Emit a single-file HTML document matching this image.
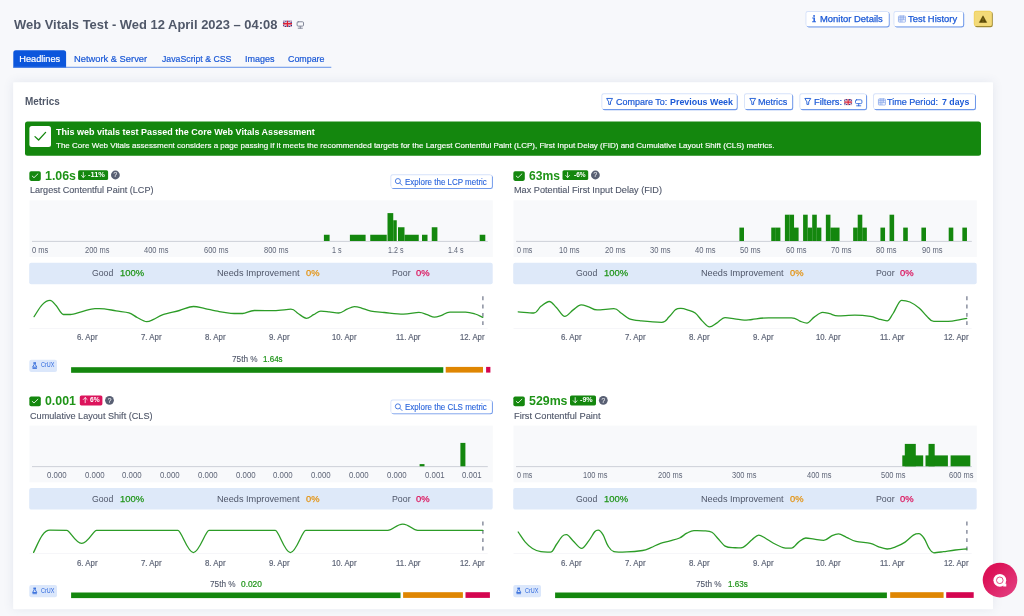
<!DOCTYPE html>
<html lang="en"><head><meta charset="utf-8"><title>Web Vitals Test</title>
<style>
html,body{margin:0;padding:0}
body{width:1024px;height:616px;overflow:hidden;background:#f7f8fb;font-family:"Liberation Sans",sans-serif;position:relative}
.b{position:absolute}
.tx{position:absolute;left:0;top:0;width:1024px;height:616px;will-change:transform}
.t{position:absolute;white-space:nowrap;line-height:1;transform-origin:0 0}
svg.o{position:absolute;left:0;top:0;width:1024px;height:616px;overflow:visible}
</style></head><body>
<div class="b" style="left:13px;top:82px;width:980px;height:527px;box-shadow:0 0 10px rgba(60,80,130,0.10)"></div>
<svg class="o" viewBox="0 0 1024 616">
<svg x="282.90" y="20.50" width="9.10" height="6.60" viewBox="0 0 60 40" preserveAspectRatio="none"><rect width="60" height="40" fill="#283088"/><path d="M0 0L60 40M60 0L0 40" stroke="#fff" stroke-width="7"/><path d="M0 0L60 40M60 0L0 40" stroke="#d8213c" stroke-width="2.6"/><path d="M30 0V40M0 20H60" stroke="#fff" stroke-width="13"/><path d="M30 0V40M0 20H60" stroke="#dc2035" stroke-width="8.5"/></svg>
<g fill="none" stroke="#7d8395" stroke-width="0.95" stroke-linecap="round"><rect x="297.08" y="21.78" width="6.45" height="4.35" rx="1.1"/><path d="M300.30 26.60V28.20M298.20 28.20H302.40"/></g>
<path d="M13.30 67.70V52.80Q13.30 50.30 15.80 50.30H63.60Q66.10 50.30 66.10 52.80V67.70Z" fill="#0c56dc"/>
<rect x="13.30" y="66.80" width="318.00" height="0.90" fill="#5285e6"/>
<rect x="806.50" y="12.10" width="83.20" height="15.30" rx="2.3" fill="#7099ea"/><rect x="805.50" y="11.10" width="83.10" height="15.20" rx="2.3" fill="#d6e2fa"/><rect x="806.40" y="12.00" width="82.20" height="14.30" rx="1.5" fill="#fff"/>
<rect x="894.50" y="12.10" width="69.70" height="15.30" rx="2.3" fill="#7099ea"/><rect x="893.50" y="11.10" width="69.60" height="15.20" rx="2.3" fill="#d6e2fa"/><rect x="894.40" y="12.00" width="68.70" height="14.30" rx="1.5" fill="#fff"/>
<rect x="974.80" y="11.80" width="18.00" height="15.40" rx="2.2" fill="#a08a32"/><rect x="973.80" y="10.80" width="17.90" height="15.30" rx="2.2" fill="#efd05c"/><rect x="974.70" y="11.70" width="17.00" height="14.40" rx="1.4" fill="#f3da78"/>
<g fill="#2f68df"><rect x="813.2" y="15.1" width="1.8" height="1.7" rx="0.4"/><path d="M812.2 17.6h2.8v3.6h1v1h-3.9v-1h1.3v-2.6h-1.2z"/></g>
<g fill="none" stroke="#7fa0ea" stroke-width="0.7"><rect x="898.45" y="16.10" width="7" height="6" rx="0.5"/><path d="M901.95 15.40V22.10M900.20 15.30V22.10M903.40 15.30V19.80M898.50 17.80H905.40M898.50 19.80H905.40"/></g>
<path d="M983 15.8L986.7 22.4H979.3Z" fill="#5a4906" stroke="#5a4906" stroke-width="0.5" stroke-linejoin="round"/><rect x="982.65" y="18.2" width="0.7" height="2.2" fill="#a8923a"/><rect x="982.65" y="21" width="0.7" height="0.7" fill="#a8923a"/>
<rect x="13.30" y="82.40" width="979.70" height="526.90" rx="1.0" fill="#fff"/>
<rect x="602.40" y="94.30" width="135.30" height="15.90" rx="2.3" fill="#7099ea"/><rect x="601.40" y="93.30" width="135.20" height="15.80" rx="2.3" fill="#d6e2fa"/><rect x="602.30" y="94.20" width="134.30" height="14.90" rx="1.5" fill="#fff"/>
<rect x="745.00" y="94.30" width="48.20" height="15.90" rx="2.3" fill="#7099ea"/><rect x="744.00" y="93.30" width="48.10" height="15.80" rx="2.3" fill="#d6e2fa"/><rect x="744.90" y="94.20" width="47.20" height="14.90" rx="1.5" fill="#fff"/>
<rect x="800.40" y="94.30" width="66.70" height="15.90" rx="2.3" fill="#7099ea"/><rect x="799.40" y="93.30" width="66.60" height="15.80" rx="2.3" fill="#d6e2fa"/><rect x="800.30" y="94.20" width="65.70" height="14.90" rx="1.5" fill="#fff"/>
<rect x="874.10" y="94.30" width="101.90" height="15.90" rx="2.3" fill="#7099ea"/><rect x="873.10" y="93.30" width="101.80" height="15.80" rx="2.3" fill="#d6e2fa"/><rect x="874.00" y="94.20" width="100.90" height="14.90" rx="1.5" fill="#fff"/>
<path d="M606.65 98.45H612.55L610.50 101.90V104.40H608.70V101.90Z" fill="none" stroke="#1b59d6" stroke-width="0.9" stroke-linejoin="round"/>
<path d="M749.75 98.45H755.65L753.60 101.90V104.40H751.80V101.90Z" fill="none" stroke="#1b59d6" stroke-width="0.9" stroke-linejoin="round"/>
<path d="M804.85 98.45H810.75L808.70 101.90V104.40H806.90V101.90Z" fill="none" stroke="#1b59d6" stroke-width="0.9" stroke-linejoin="round"/>
<svg x="844.10" y="99.10" width="8.10" height="6.10" viewBox="0 0 60 40" preserveAspectRatio="none"><rect width="60" height="40" fill="#283088"/><path d="M0 0L60 40M60 0L0 40" stroke="#fff" stroke-width="7"/><path d="M0 0L60 40M60 0L0 40" stroke="#d8213c" stroke-width="2.6"/><path d="M30 0V40M0 20H60" stroke="#fff" stroke-width="13"/><path d="M30 0V40M0 20H60" stroke="#dc2035" stroke-width="8.5"/></svg>
<g fill="none" stroke="#1b59d6" stroke-width="0.8" stroke-linecap="round"><rect x="855.50" y="99.80" width="6.40" height="3.80" rx="1.1"/><path d="M858.70 104.00V105.80M856.60 105.80H860.80"/></g>
<g fill="none" stroke="#7fa0ea" stroke-width="0.7"><rect x="878.45" y="99.00" width="7" height="6" rx="0.5"/><path d="M881.95 98.30V105.00M880.20 98.20V105.00M883.40 98.20V102.70M878.50 100.70H885.40M878.50 102.70H885.40"/></g>
<rect x="25.00" y="121.50" width="956.00" height="34.30" rx="2.5" fill="#14870e"/>
<rect x="29.40" y="126.00" width="21.60" height="21.00" rx="2.5" fill="#fff"/>
<path d="M35 136.6L38.6 140L45.6 132.4" fill="none" stroke="#14870e" stroke-width="1.3" stroke-linecap="round" stroke-linejoin="round"/>
<rect x="29.35" y="171.25" width="11.45" height="9.65" rx="1.8" fill="#14870e"/>
<path d="M32.25 176.10L34.00 177.70L37.90 173.90" fill="none" stroke="#eaf5e9" stroke-width="0.9" stroke-linecap="round" stroke-linejoin="round"/>
<rect x="78.10" y="170.20" width="30.00" height="9.90" rx="1.6" fill="#14870e"/>
<path d="M83.30 172.30V177.40M81.40 175.50L83.30 177.40L85.20 175.50" fill="none" stroke="#fff" stroke-width="0.8" stroke-linecap="round" stroke-linejoin="round"/>
<circle cx="115.40" cy="175.00" r="4.4" fill="#585f73"/>
<rect x="391.40" y="175.30" width="101.50" height="13.70" rx="2.3" fill="#7099ea"/><rect x="390.40" y="174.30" width="101.40" height="13.60" rx="2.3" fill="#d6e2fa"/><rect x="391.30" y="175.20" width="100.50" height="12.70" rx="1.5" fill="#fff"/>
<circle cx="397.90" cy="181.10" r="2.55" fill="none" stroke="#3a70e0" stroke-width="0.9"/><path d="M399.80 183.00L402.00 185.20" stroke="#3a70e0" stroke-width="0.9" stroke-linecap="round"/>
<rect x="29.50" y="200.30" width="463.30" height="56.70" fill="#f8f9fb"/>
<rect x="32.00" y="240.90" width="455.80" height="0.90" fill="#c9ccd4"/>
<rect x="29.20" y="262.70" width="463.50" height="21.60" rx="2.0" fill="#dee9f9"/>
<rect x="29.50" y="328.00" width="458.20" height="0.70" fill="#f2f3f7"/>
<path d="M482.90 296.30V328.80" stroke="#6e7488" stroke-width="1.2" stroke-dasharray="3.9 4.4" fill="none"/>
<rect x="323.90" y="234.75" width="5.70" height="6.25" fill="#14870e"/>
<rect x="349.90" y="234.75" width="15.70" height="6.25" fill="#14870e"/>
<rect x="370.25" y="234.75" width="16.50" height="6.25" fill="#14870e"/>
<rect x="387.50" y="213.10" width="5.75" height="27.90" fill="#14870e"/>
<rect x="393.25" y="220.25" width="3.50" height="20.75" fill="#14870e"/>
<rect x="398.00" y="227.25" width="6.50" height="13.75" fill="#14870e"/>
<rect x="404.50" y="234.75" width="14.25" height="6.25" fill="#14870e"/>
<rect x="422.00" y="234.75" width="5.50" height="6.25" fill="#14870e"/>
<rect x="431.75" y="227.25" width="5.65" height="13.75" fill="#14870e"/>
<rect x="479.70" y="234.75" width="5.60" height="6.25" fill="#14870e"/>
<path d="M34.1 316.6C36.8 312.6 39.6 307.3 42.3 304.6C44.9 301.9 47.7 300.4 50.0 300.4C52.3 300.4 54.1 303.4 56.3 305.8C58.5 308.2 61.0 314.5 63.4 314.5C65.8 314.5 67.3 314.5 70.4 314.5C73.5 314.5 78.0 312.6 82.1 311.6C86.2 310.6 91.3 308.6 95.0 308.6C98.7 308.6 100.9 308.4 104.4 308.8C107.9 309.2 112.0 310.2 116.1 310.9C120.2 311.6 125.5 311.7 129.0 312.8C132.5 313.9 134.3 316.0 137.2 317.5C140.1 319.0 143.9 321.7 146.6 321.7C149.3 321.7 150.9 320.6 153.6 319.4C156.3 318.2 158.7 316.2 163.0 314.7C167.3 313.2 174.3 311.9 179.4 310.5C184.5 309.1 189.1 306.5 193.4 306.5C197.7 306.5 200.8 307.8 205.1 308.6C209.4 309.5 214.9 310.8 219.2 311.6C223.5 312.4 227.0 313.0 230.9 313.3C234.8 313.6 238.7 313.5 242.6 313.5C246.5 313.5 249.2 310.5 254.4 310.5C259.7 310.5 268.0 310.6 274.1 310.6C280.2 310.6 286.9 309.2 290.9 309.2C294.9 309.2 295.5 312.0 298.1 313.5C300.7 315.0 303.8 318.3 306.4 318.3C309.0 318.3 311.2 315.9 313.6 314.7C316.0 313.5 318.2 311.1 320.8 311.1C323.4 311.1 326.2 311.5 329.2 311.8C332.2 312.1 335.7 313.0 338.7 313.0C341.7 313.0 344.5 310.3 347.1 309.2C349.7 308.1 351.9 306.6 354.3 306.6C356.7 306.6 358.7 307.2 361.5 308.0C364.3 308.8 367.2 310.4 371.0 311.1C374.8 311.9 378.8 312.0 384.2 312.5C389.6 313.0 397.5 314.2 403.3 314.2C409.1 314.2 414.9 312.3 418.9 312.3C422.9 312.3 424.6 313.9 427.2 314.7C429.8 315.5 432.0 317.1 434.4 317.1C436.8 317.1 439.0 316.2 441.6 315.4C444.2 314.6 446.0 312.1 450.0 312.1C454.0 312.1 461.3 312.1 465.5 312.1C469.7 312.1 472.2 313.1 475.1 314.0C478.0 314.9 480.2 316.2 482.8 317.3" fill="none" stroke="#2c9c27" stroke-width="1.3" stroke-linejoin="round" stroke-linecap="round"/>
<rect x="29.30" y="359.70" width="27.70" height="12.30" rx="2.0" fill="#dbe7fb"/>
<path d="M33.80 362.90h1.8M34.10 362.90v1.6l-1.5 2.7h4.2l-1.5 -2.7v-1.6M32.90 368.40h3.6" fill="none" stroke="#1b59d6" stroke-width="0.8" stroke-linejoin="round" stroke-linecap="round"/>
<rect x="71.10" y="367.20" width="372.20" height="5.60" fill="#14870e"/>
<rect x="445.70" y="366.90" width="37.30" height="5.70" fill="#df8602"/>
<rect x="486.10" y="366.90" width="4.30" height="5.70" fill="#d40550"/>
<rect x="513.35" y="171.25" width="11.45" height="9.65" rx="1.8" fill="#14870e"/>
<path d="M516.25 176.10L518.00 177.70L521.90 173.90" fill="none" stroke="#eaf5e9" stroke-width="0.9" stroke-linecap="round" stroke-linejoin="round"/>
<rect x="562.50" y="170.20" width="25.70" height="9.90" rx="1.6" fill="#14870e"/>
<path d="M567.60 172.30V177.40M565.70 175.50L567.60 177.40L569.50 175.50" fill="none" stroke="#fff" stroke-width="0.8" stroke-linecap="round" stroke-linejoin="round"/>
<circle cx="595.40" cy="175.00" r="4.4" fill="#585f73"/>
<rect x="513.50" y="200.30" width="463.30" height="56.70" fill="#f8f9fb"/>
<rect x="516.00" y="240.90" width="455.80" height="0.90" fill="#c9ccd4"/>
<rect x="513.20" y="262.70" width="463.50" height="21.60" rx="2.0" fill="#dee9f9"/>
<rect x="513.50" y="328.00" width="458.20" height="0.70" fill="#f2f3f7"/>
<path d="M966.90 296.30V328.80" stroke="#6e7488" stroke-width="1.2" stroke-dasharray="3.9 4.4" fill="none"/>
<rect x="739.40" y="227.60" width="4.60" height="13.40" fill="#14870e"/>
<rect x="771.25" y="227.60" width="4.60" height="13.40" fill="#14870e"/>
<rect x="775.80" y="227.60" width="4.60" height="13.40" fill="#14870e"/>
<rect x="784.90" y="214.70" width="4.60" height="26.30" fill="#14870e"/>
<rect x="789.45" y="214.70" width="4.60" height="26.30" fill="#14870e"/>
<rect x="794.00" y="227.60" width="4.60" height="13.40" fill="#14870e"/>
<rect x="803.10" y="214.70" width="4.60" height="26.30" fill="#14870e"/>
<rect x="807.65" y="227.60" width="4.60" height="13.40" fill="#14870e"/>
<rect x="812.20" y="214.70" width="4.60" height="26.30" fill="#14870e"/>
<rect x="816.75" y="227.60" width="4.60" height="13.40" fill="#14870e"/>
<rect x="825.85" y="214.70" width="4.60" height="26.30" fill="#14870e"/>
<rect x="830.40" y="227.60" width="4.60" height="13.40" fill="#14870e"/>
<rect x="834.95" y="227.60" width="4.60" height="13.40" fill="#14870e"/>
<rect x="853.15" y="227.60" width="4.60" height="13.40" fill="#14870e"/>
<rect x="857.70" y="214.70" width="4.60" height="26.30" fill="#14870e"/>
<rect x="862.25" y="227.60" width="4.60" height="13.40" fill="#14870e"/>
<rect x="880.45" y="227.60" width="4.60" height="13.40" fill="#14870e"/>
<rect x="889.55" y="214.70" width="4.60" height="26.30" fill="#14870e"/>
<rect x="903.20" y="227.60" width="4.60" height="13.40" fill="#14870e"/>
<rect x="921.40" y="227.60" width="4.60" height="13.40" fill="#14870e"/>
<rect x="948.70" y="227.60" width="4.60" height="13.40" fill="#14870e"/>
<rect x="962.35" y="227.60" width="4.60" height="13.40" fill="#14870e"/>
<path d="M518.2 311.8C523.4 312.2 529.9 313.0 533.7 313.0C537.5 313.0 538.3 308.2 540.9 306.3C543.5 304.4 546.7 301.5 549.3 301.5C551.9 301.5 553.8 305.0 556.4 307.5C559.0 310.0 562.0 316.4 564.8 316.4C567.6 316.4 570.5 311.8 573.2 309.9C575.9 308.0 578.5 304.9 581.1 304.9C583.7 304.9 586.0 306.0 588.7 306.8C591.4 307.6 592.9 309.9 597.1 309.9C601.3 309.9 609.9 308.7 613.9 308.7C617.9 308.7 618.4 311.3 621.0 313.0C623.6 314.7 626.0 317.5 629.4 318.8C632.8 320.1 636.0 320.3 641.4 320.9C646.8 321.5 657.1 322.3 661.7 322.3C666.3 322.3 666.6 319.2 668.9 317.1C671.2 315.0 673.6 311.1 675.6 309.6C677.6 308.2 679.0 308.4 681.0 308.4C683.0 308.4 684.9 309.0 687.3 309.8C689.7 310.6 692.7 311.1 695.2 313.0C697.7 314.9 700.0 318.8 702.4 321.1C704.8 323.4 707.1 326.9 709.5 326.9C711.9 326.9 714.1 324.7 716.7 323.1C719.3 321.6 722.1 317.6 725.1 317.6C728.1 317.6 731.5 318.4 734.7 318.8C737.9 319.2 741.3 320.2 744.2 320.2C747.1 320.2 747.9 319.9 752.0 319.5C756.1 319.1 762.1 317.8 768.7 317.8C775.3 317.8 786.2 317.8 791.4 317.8C796.6 317.8 797.2 320.2 799.8 321.1C802.4 322.0 804.6 323.1 807.0 323.1C809.4 323.1 811.6 318.9 814.2 317.1C816.8 315.3 819.9 312.3 822.5 312.3C825.1 312.3 827.1 313.1 829.7 313.7C832.3 314.3 833.9 315.9 838.1 315.9C842.3 315.9 849.4 315.2 854.8 315.2C860.2 315.2 866.4 315.8 870.4 316.4C874.4 317.0 876.0 318.2 878.8 319.0C881.6 319.8 884.7 320.9 887.1 320.9C889.5 320.9 890.7 316.9 893.1 313.5C895.5 310.1 898.7 300.3 901.5 300.3C904.3 300.3 906.9 300.7 909.9 302.0C912.9 303.3 916.6 305.9 919.4 308.2C922.2 310.5 924.2 313.7 926.6 315.9C929.0 318.1 930.2 321.4 933.8 321.4C937.4 321.4 943.7 321.4 948.1 321.4C952.5 321.4 957.0 320.2 960.1 319.7C963.2 319.2 964.6 318.8 966.8 318.3" fill="none" stroke="#2c9c27" stroke-width="1.3" stroke-linejoin="round" stroke-linecap="round"/>
<rect x="29.35" y="396.55" width="11.45" height="9.65" rx="1.8" fill="#14870e"/>
<path d="M32.25 401.40L34.00 403.00L37.90 399.20" fill="none" stroke="#eaf5e9" stroke-width="0.9" stroke-linecap="round" stroke-linejoin="round"/>
<rect x="79.80" y="395.50" width="22.60" height="9.90" rx="1.6" fill="#dc145c"/>
<path d="M85.20 402.70V397.60M83.30 399.50L85.20 397.60L87.10 399.50" fill="none" stroke="#fff" stroke-width="0.8" stroke-linecap="round" stroke-linejoin="round"/>
<circle cx="109.50" cy="400.30" r="4.4" fill="#585f73"/>
<rect x="391.40" y="400.60" width="101.50" height="13.70" rx="2.3" fill="#7099ea"/><rect x="390.40" y="399.60" width="101.40" height="13.60" rx="2.3" fill="#d6e2fa"/><rect x="391.30" y="400.50" width="100.50" height="12.70" rx="1.5" fill="#fff"/>
<circle cx="397.90" cy="406.40" r="2.55" fill="none" stroke="#3a70e0" stroke-width="0.9"/><path d="M399.80 408.30L402.00 410.50" stroke="#3a70e0" stroke-width="0.9" stroke-linecap="round"/>
<rect x="29.50" y="425.60" width="463.30" height="56.70" fill="#f8f9fb"/>
<rect x="32.00" y="466.20" width="455.80" height="0.90" fill="#c9ccd4"/>
<rect x="29.20" y="488.00" width="463.50" height="21.60" rx="2.0" fill="#dee9f9"/>
<rect x="29.50" y="553.30" width="458.20" height="0.70" fill="#f2f3f7"/>
<path d="M482.90 521.60V554.10" stroke="#6e7488" stroke-width="1.2" stroke-dasharray="3.9 4.4" fill="none"/>
<rect x="419.60" y="464.10" width="4.90" height="2.20" fill="#14870e"/>
<rect x="460.40" y="442.90" width="5.00" height="23.40" fill="#14870e"/>
<path d="M33.6 552.4C38.5 542.5 42.5 530.2 49.9 530.2L66.7 530.4C70.2 530.4 75.2 543.3 81.7 543.3C88.2 543.3 93.1 530.4 96.6 530.4L177.9 530.4C181.4 530.4 187.4 552.6 193.4 552.6C199.4 552.6 205.5 530.4 209.0 530.4L275.3 530.4C278.8 530.4 284.4 552.6 290.4 552.6C296.4 552.6 302.2 530.4 305.7 530.4L387.8 530.4C392.8 530.4 396.3 524.1 402.8 524.1C409.3 524.1 412.7 530.4 417.7 530.4L482.8 530.4" fill="none" stroke="#2c9c27" stroke-width="1.3" stroke-linejoin="round" stroke-linecap="round"/>
<rect x="29.30" y="585.00" width="27.70" height="12.30" rx="2.0" fill="#dbe7fb"/>
<path d="M33.80 588.20h1.8M34.10 588.20v1.6l-1.5 2.7h4.2l-1.5 -2.7v-1.6M32.90 593.70h3.6" fill="none" stroke="#1b59d6" stroke-width="0.8" stroke-linejoin="round" stroke-linecap="round"/>
<rect x="71.10" y="592.50" width="329.40" height="5.60" fill="#14870e"/>
<rect x="403.10" y="592.20" width="59.80" height="5.70" fill="#df8602"/>
<rect x="465.50" y="592.20" width="24.40" height="5.70" fill="#d40550"/>
<rect x="513.35" y="396.55" width="11.45" height="9.65" rx="1.8" fill="#14870e"/>
<path d="M516.25 401.40L518.00 403.00L521.90 399.20" fill="none" stroke="#eaf5e9" stroke-width="0.9" stroke-linecap="round" stroke-linejoin="round"/>
<rect x="570.00" y="395.50" width="26.00" height="9.90" rx="1.6" fill="#14870e"/>
<path d="M575.20 397.60V402.70M573.30 400.80L575.20 402.70L577.10 400.80" fill="none" stroke="#fff" stroke-width="0.8" stroke-linecap="round" stroke-linejoin="round"/>
<circle cx="603.30" cy="400.30" r="4.4" fill="#585f73"/>
<rect x="513.50" y="425.60" width="463.30" height="56.70" fill="#f8f9fb"/>
<rect x="516.00" y="466.20" width="455.80" height="0.90" fill="#c9ccd4"/>
<rect x="513.20" y="488.00" width="463.50" height="21.60" rx="2.0" fill="#dee9f9"/>
<rect x="513.50" y="553.30" width="458.20" height="0.70" fill="#f2f3f7"/>
<path d="M966.90 521.60V554.10" stroke="#6e7488" stroke-width="1.2" stroke-dasharray="3.9 4.4" fill="none"/>
<rect x="902.30" y="455.40" width="20.90" height="10.90" fill="#14870e"/>
<rect x="904.80" y="443.90" width="11.00" height="22.40" fill="#14870e"/>
<rect x="925.50" y="455.40" width="22.40" height="10.90" fill="#14870e"/>
<rect x="928.50" y="443.90" width="6.20" height="22.40" fill="#14870e"/>
<rect x="950.60" y="455.40" width="19.70" height="10.90" fill="#14870e"/>
<path d="M518.2 532.0C520.6 535.4 522.9 539.4 525.3 542.1C527.7 544.9 529.9 546.9 532.5 548.5C535.1 550.1 537.9 551.1 540.9 551.7C543.9 552.3 547.9 552.1 550.5 552.1C553.1 552.1 554.4 547.2 556.4 544.5C558.4 541.8 560.7 537.7 562.4 536.1C564.1 534.5 564.9 534.7 566.7 534.7C568.5 534.7 570.7 538.6 573.2 540.9C575.7 543.2 579.0 548.3 581.6 548.3C584.2 548.3 586.5 543.6 588.7 540.9C590.9 538.1 593.1 533.6 594.7 531.8C596.3 530.0 596.9 530.1 598.3 530.1C599.7 530.1 601.5 532.3 603.1 534.9C604.7 537.5 606.1 542.9 607.9 545.7C609.7 548.5 610.7 550.7 613.9 551.7C617.1 552.7 622.2 551.9 627.0 551.9C631.8 551.9 638.6 551.2 642.6 550.5C646.6 549.8 647.9 548.8 650.9 547.6C653.9 546.4 657.3 544.4 660.5 543.3C663.7 542.2 666.9 541.8 670.1 540.9C673.3 540.0 676.8 539.3 679.6 538.0C682.4 536.7 684.4 534.4 686.8 533.2C689.2 532.0 691.2 530.6 694.0 530.6C696.8 530.6 700.6 530.5 703.6 530.8C706.6 531.1 709.5 531.0 711.9 532.3C714.3 533.6 715.7 536.2 717.9 538.5C720.1 540.8 722.7 544.6 725.1 546.1C727.5 547.6 729.3 547.6 732.3 547.6C735.3 547.6 739.7 548.6 743.0 547.3C746.3 546.0 749.4 541.7 752.0 539.7C754.6 537.7 756.5 535.1 758.7 535.1C760.9 535.1 762.6 536.6 765.1 538.0C767.6 539.4 770.5 541.7 773.5 543.3C776.5 544.9 780.1 546.8 783.1 547.6C786.1 548.4 788.8 548.1 791.4 548.1C794.0 548.1 796.2 543.8 798.6 542.1C801.0 540.4 803.2 538.0 805.8 538.0C808.4 538.0 811.2 538.8 814.2 539.2C817.2 539.6 820.7 540.4 823.7 540.4C826.7 540.4 829.6 536.7 832.1 535.6C834.6 534.5 836.2 533.9 838.6 533.9C841.0 533.9 843.6 536.0 846.5 537.3C849.4 538.5 852.0 540.4 856.0 541.4C860.0 542.4 866.6 542.4 870.4 543.3C874.2 544.2 876.0 545.9 878.8 546.9C881.6 547.9 884.3 549.0 887.1 549.0C889.9 549.0 892.5 548.0 895.5 546.9C898.5 545.8 902.1 544.1 905.1 542.1C908.1 540.1 911.1 536.5 913.4 535.1C915.7 533.7 917.1 533.7 918.9 533.7C920.7 533.7 922.5 536.1 924.2 538.5C925.9 540.9 927.4 545.7 929.0 548.1C930.6 550.5 931.4 552.8 933.8 552.8C936.2 552.8 939.7 552.2 943.3 551.7C946.9 551.2 951.4 550.5 955.3 550.0C959.2 549.5 963.0 549.3 966.8 549.0" fill="none" stroke="#2c9c27" stroke-width="1.3" stroke-linejoin="round" stroke-linecap="round"/>
<rect x="513.30" y="585.00" width="27.70" height="12.30" rx="2.0" fill="#dbe7fb"/>
<path d="M517.80 588.20h1.8M518.10 588.20v1.6l-1.5 2.7h4.2l-1.5 -2.7v-1.6M516.90 593.70h3.6" fill="none" stroke="#1b59d6" stroke-width="0.8" stroke-linejoin="round" stroke-linecap="round"/>
<rect x="555.10" y="592.50" width="331.80" height="5.60" fill="#14870e"/>
<rect x="890.20" y="592.20" width="53.40" height="5.70" fill="#df8602"/>
<rect x="946.20" y="592.20" width="27.50" height="5.70" fill="#d40550"/>
<defs><linearGradient id="cg" x1="0.15" y1="0.15" x2="0.85" y2="0.85"><stop offset="0.15" stop-color="#dc1257"/><stop offset="1" stop-color="#e23a7c"/></linearGradient></defs><circle cx="1000" cy="580.1" r="17.3" fill="url(#cg)"/>
<circle cx="999.8" cy="580.3" r="6.4" fill="#fff"/><rect x="1003.2" y="583.5" width="3.1" height="3.1" rx="0.3" fill="#fff"/><circle cx="999.8" cy="580.3" r="3.3" fill="none" stroke="#de2467" stroke-width="0.8"/>

</svg>
<div class="tx">
<span class="t" style="left:14.30px;top:18.00px;font-size:13.3px;font-weight:700;transform:scaleX(0.9741);color:#505869">Web Vitals Test - Wed 12 April 2023 – 04:08</span>
<span class="t" style="left:19.30px;top:55.00px;font-size:9.2px;-webkit-text-stroke:0.2px #ffffff;color:#ffffff">Headlines</span>
<span class="t" style="left:74.40px;top:55.00px;font-size:9.2px;-webkit-text-stroke:0.2px #1b59d6;transform:scaleX(1.0153);color:#1b59d6">Network &amp; Server</span>
<span class="t" style="left:161.50px;top:55.00px;font-size:9.2px;-webkit-text-stroke:0.2px #1b59d6;transform:scaleX(0.9505);color:#1b59d6">JavaScript &amp; CSS</span>
<span class="t" style="left:244.90px;top:55.00px;font-size:9.2px;-webkit-text-stroke:0.2px #1b59d6;transform:scaleX(0.9787);color:#1b59d6">Images</span>
<span class="t" style="left:288.40px;top:55.00px;font-size:9.2px;-webkit-text-stroke:0.2px #1b59d6;transform:scaleX(0.9657);color:#1b59d6">Compare</span>
<span class="t" style="left:820.40px;top:15.00px;font-size:9.0px;-webkit-text-stroke:0.25px #1b59d6;transform:scaleX(1.0461);color:#1b59d6">Monitor Details</span>
<span class="t" style="left:908.40px;top:15.00px;font-size:9.0px;-webkit-text-stroke:0.25px #1b59d6;transform:scaleX(1.0443);color:#1b59d6">Test History</span>
<span class="t" style="left:25.00px;top:97.00px;font-size:10.3px;font-weight:700;transform:scaleX(0.9650);color:#505869">Metrics</span>
<span class="t" style="left:615.80px;top:98.00px;font-size:9.2px;-webkit-text-stroke:0.2px #1b59d6;transform:scaleX(0.9764);color:#1b59d6">Compare To:</span>
<span class="t" style="left:669.60px;top:98.00px;font-size:9.2px;font-weight:700;transform:scaleX(0.9662);color:#1b59d6">Previous Week</span>
<span class="t" style="left:758.40px;top:98.00px;font-size:9.2px;-webkit-text-stroke:0.2px #1b59d6;transform:scaleX(0.9862);color:#1b59d6">Metrics</span>
<span class="t" style="left:813.60px;top:98.00px;font-size:9.2px;-webkit-text-stroke:0.2px #1b59d6;transform:scaleX(1.0159);color:#1b59d6">Filters:</span>
<span class="t" style="left:887.40px;top:98.00px;font-size:9.2px;-webkit-text-stroke:0.2px #1b59d6;transform:scaleX(0.9855);color:#1b59d6">Time Period:</span>
<span class="t" style="left:941.70px;top:98.00px;font-size:9.2px;font-weight:700;transform:scaleX(0.9542);color:#1b59d6">7 days</span>
<span class="t" style="left:56.40px;top:128.00px;font-size:9.2px;font-weight:700;transform:scaleX(0.9806);color:#fff">This web vitals test Passed the Core Web Vitals Assessment</span>
<span class="t" style="left:56.40px;top:142.00px;font-size:7.8px;-webkit-text-stroke:0.15px #fff;transform:scaleX(1.0297);color:#fff">The Core Web Vitals assessment considers a page passing if it meets the recommended targets for the Largest Contentful Paint (LCP), First Input Delay (FID) and Cumulative Layout Shift (CLS) metrics.</span>
<span class="t" style="left:44.80px;top:170.00px;font-size:12.2px;font-weight:700;transform:scaleX(1.0164);color:#1f9418">1.06s</span>
<span class="t" style="left:88.30px;top:172.00px;font-size:6.5px;font-weight:700;transform:scaleX(1.1397);color:#fff">-11%</span>
<span class="t" style="left:113.55px;top:172.00px;font-size:6.6px;-webkit-text-stroke:0.15px #e4e6ea;color:#e4e6ea">?</span>
<span class="t" style="left:29.60px;top:186.00px;font-size:9.0px;-webkit-text-stroke:0.12px #4f5669;transform:scaleX(1.0075);color:#4f5669">Largest Contentful Paint (LCP)</span>
<span class="t" style="left:404.80px;top:178.00px;font-size:8.3px;-webkit-text-stroke:0.1px #2460db;transform:scaleX(0.9604);color:#2460db">Explore the LCP metric</span>
<span class="t" style="left:92.30px;top:268.00px;font-size:9.8px;transform:scaleX(0.8887);color:#4f5669">Good</span>
<span class="t" style="left:119.90px;top:268.00px;font-size:9.8px;-webkit-text-stroke:0.25px #1f9418;transform:scaleX(0.9616);color:#1f9418">100%</span>
<span class="t" style="left:217.20px;top:268.00px;font-size:9.8px;transform:scaleX(0.9363);color:#4f5669">Needs Improvement</span>
<span class="t" style="left:305.50px;top:268.00px;font-size:9.8px;-webkit-text-stroke:0.25px #e39312;transform:scaleX(0.9526);color:#e39312">0%</span>
<span class="t" style="left:391.90px;top:268.00px;font-size:9.8px;transform:scaleX(0.8984);color:#4f5669">Poor</span>
<span class="t" style="left:416.30px;top:268.00px;font-size:9.8px;-webkit-text-stroke:0.25px #dc145c;transform:scaleX(0.9596);color:#dc145c">0%</span>
<span class="t" style="left:76.55px;top:333.00px;font-size:8.3px;-webkit-text-stroke:0.2px #5f6678;transform:scaleX(0.9452);color:#5f6678">6. Apr</span>
<span class="t" style="left:140.85px;top:333.00px;font-size:8.3px;-webkit-text-stroke:0.2px #5f6678;transform:scaleX(0.9452);color:#5f6678">7. Apr</span>
<span class="t" style="left:205.15px;top:333.00px;font-size:8.3px;-webkit-text-stroke:0.2px #5f6678;transform:scaleX(0.9452);color:#5f6678">8. Apr</span>
<span class="t" style="left:269.45px;top:333.00px;font-size:8.3px;-webkit-text-stroke:0.2px #5f6678;transform:scaleX(0.9452);color:#5f6678">9. Apr</span>
<span class="t" style="left:331.75px;top:333.00px;font-size:8.3px;-webkit-text-stroke:0.2px #5f6678;transform:scaleX(0.9317);color:#5f6678">10. Apr</span>
<span class="t" style="left:396.05px;top:333.00px;font-size:8.3px;-webkit-text-stroke:0.2px #5f6678;transform:scaleX(0.9538);color:#5f6678">11. Apr</span>
<span class="t" style="left:460.30px;top:333.00px;font-size:8.3px;-webkit-text-stroke:0.2px #5f6678;transform:scaleX(0.9317);color:#5f6678">12. Apr</span>
<span class="t" style="left:32.20px;top:246.00px;font-size:8.3px;transform:scaleX(0.9119);color:#5f6678">0 ms</span>
<span class="t" style="left:84.65px;top:246.00px;font-size:8.3px;transform:scaleX(0.9001);color:#5f6678">200 ms</span>
<span class="t" style="left:144.45px;top:246.00px;font-size:8.3px;transform:scaleX(0.9001);color:#5f6678">400 ms</span>
<span class="t" style="left:204.25px;top:246.00px;font-size:8.3px;transform:scaleX(0.9001);color:#5f6678">600 ms</span>
<span class="t" style="left:264.15px;top:246.00px;font-size:8.3px;transform:scaleX(0.9001);color:#5f6678">800 ms</span>
<span class="t" style="left:331.60px;top:246.00px;font-size:8.3px;transform:scaleX(0.8666);color:#5f6678">1 s</span>
<span class="t" style="left:388.25px;top:246.00px;font-size:8.3px;transform:scaleX(0.8611);color:#5f6678">1.2 s</span>
<span class="t" style="left:448.05px;top:246.00px;font-size:8.3px;transform:scaleX(0.8611);color:#5f6678">1.4 s</span>
<span class="t" style="left:40.90px;top:362.00px;font-size:6.4px;transform:scaleX(0.8512);color:#2c66dd">CrUX</span>
<span class="t" style="left:231.50px;top:355.00px;font-size:8.3px;-webkit-text-stroke:0.1px #4f5669;transform:scaleX(0.9906);color:#4f5669">75th %</span>
<span class="t" style="left:263.40px;top:355.00px;font-size:8.3px;-webkit-text-stroke:0.2px #1f9418;transform:scaleX(0.9657);color:#1f9418">1.64s</span>
<span class="t" style="left:528.80px;top:170.00px;font-size:12.2px;font-weight:700;transform:scaleX(0.9945);color:#1f9418">63ms</span>
<span class="t" style="left:573.60px;top:172.00px;font-size:6.5px;font-weight:700;transform:scaleX(1.0032);color:#fff">-6%</span>
<span class="t" style="left:593.55px;top:172.00px;font-size:6.6px;-webkit-text-stroke:0.15px #e4e6ea;color:#e4e6ea">?</span>
<span class="t" style="left:513.60px;top:186.00px;font-size:9.0px;-webkit-text-stroke:0.12px #4f5669;transform:scaleX(1.0169);color:#4f5669">Max Potential First Input Delay (FID)</span>
<span class="t" style="left:576.30px;top:268.00px;font-size:9.8px;transform:scaleX(0.8887);color:#4f5669">Good</span>
<span class="t" style="left:603.90px;top:268.00px;font-size:9.8px;-webkit-text-stroke:0.25px #1f9418;transform:scaleX(0.9616);color:#1f9418">100%</span>
<span class="t" style="left:701.20px;top:268.00px;font-size:9.8px;transform:scaleX(0.9363);color:#4f5669">Needs Improvement</span>
<span class="t" style="left:789.50px;top:268.00px;font-size:9.8px;-webkit-text-stroke:0.25px #e39312;transform:scaleX(0.9526);color:#e39312">0%</span>
<span class="t" style="left:875.90px;top:268.00px;font-size:9.8px;transform:scaleX(0.8984);color:#4f5669">Poor</span>
<span class="t" style="left:900.30px;top:268.00px;font-size:9.8px;-webkit-text-stroke:0.25px #dc145c;transform:scaleX(0.9596);color:#dc145c">0%</span>
<span class="t" style="left:560.55px;top:333.00px;font-size:8.3px;-webkit-text-stroke:0.2px #5f6678;transform:scaleX(0.9452);color:#5f6678">6. Apr</span>
<span class="t" style="left:624.85px;top:333.00px;font-size:8.3px;-webkit-text-stroke:0.2px #5f6678;transform:scaleX(0.9452);color:#5f6678">7. Apr</span>
<span class="t" style="left:689.15px;top:333.00px;font-size:8.3px;-webkit-text-stroke:0.2px #5f6678;transform:scaleX(0.9452);color:#5f6678">8. Apr</span>
<span class="t" style="left:753.45px;top:333.00px;font-size:8.3px;-webkit-text-stroke:0.2px #5f6678;transform:scaleX(0.9452);color:#5f6678">9. Apr</span>
<span class="t" style="left:815.75px;top:333.00px;font-size:8.3px;-webkit-text-stroke:0.2px #5f6678;transform:scaleX(0.9317);color:#5f6678">10. Apr</span>
<span class="t" style="left:880.05px;top:333.00px;font-size:8.3px;-webkit-text-stroke:0.2px #5f6678;transform:scaleX(0.9538);color:#5f6678">11. Apr</span>
<span class="t" style="left:944.30px;top:333.00px;font-size:8.3px;-webkit-text-stroke:0.2px #5f6678;transform:scaleX(0.9317);color:#5f6678">12. Apr</span>
<span class="t" style="left:516.80px;top:246.00px;font-size:8.3px;transform:scaleX(0.8563);color:#5f6678">0 ms</span>
<span class="t" style="left:559.20px;top:246.00px;font-size:8.3px;transform:scaleX(0.9118);color:#5f6678">10 ms</span>
<span class="t" style="left:604.50px;top:246.00px;font-size:8.3px;transform:scaleX(0.9118);color:#5f6678">20 ms</span>
<span class="t" style="left:649.80px;top:246.00px;font-size:8.3px;transform:scaleX(0.9118);color:#5f6678">30 ms</span>
<span class="t" style="left:695.10px;top:246.00px;font-size:8.3px;transform:scaleX(0.9118);color:#5f6678">40 ms</span>
<span class="t" style="left:740.40px;top:246.00px;font-size:8.3px;transform:scaleX(0.9118);color:#5f6678">50 ms</span>
<span class="t" style="left:785.70px;top:246.00px;font-size:8.3px;transform:scaleX(0.9118);color:#5f6678">60 ms</span>
<span class="t" style="left:831.00px;top:246.00px;font-size:8.3px;transform:scaleX(0.9118);color:#5f6678">70 ms</span>
<span class="t" style="left:876.30px;top:246.00px;font-size:8.3px;transform:scaleX(0.9118);color:#5f6678">80 ms</span>
<span class="t" style="left:921.60px;top:246.00px;font-size:8.3px;transform:scaleX(0.9118);color:#5f6678">90 ms</span>
<span class="t" style="left:44.80px;top:395.00px;font-size:12.2px;font-weight:700;transform:scaleX(1.0131);color:#1f9418">0.001</span>
<span class="t" style="left:89.80px;top:397.00px;font-size:6.5px;font-weight:700;transform:scaleX(1.0206);color:#fff">6%</span>
<span class="t" style="left:107.65px;top:398.00px;font-size:6.6px;-webkit-text-stroke:0.15px #e4e6ea;color:#e4e6ea">?</span>
<span class="t" style="left:29.60px;top:412.00px;font-size:9.0px;-webkit-text-stroke:0.12px #4f5669;transform:scaleX(1.0119);color:#4f5669">Cumulative Layout Shift (CLS)</span>
<span class="t" style="left:404.80px;top:403.00px;font-size:8.3px;-webkit-text-stroke:0.1px #2460db;transform:scaleX(0.9588);color:#2460db">Explore the CLS metric</span>
<span class="t" style="left:92.30px;top:494.00px;font-size:9.8px;transform:scaleX(0.8887);color:#4f5669">Good</span>
<span class="t" style="left:119.90px;top:494.00px;font-size:9.8px;-webkit-text-stroke:0.25px #1f9418;transform:scaleX(0.9616);color:#1f9418">100%</span>
<span class="t" style="left:217.20px;top:494.00px;font-size:9.8px;transform:scaleX(0.9363);color:#4f5669">Needs Improvement</span>
<span class="t" style="left:305.50px;top:494.00px;font-size:9.8px;-webkit-text-stroke:0.25px #e39312;transform:scaleX(0.9526);color:#e39312">0%</span>
<span class="t" style="left:391.90px;top:494.00px;font-size:9.8px;transform:scaleX(0.8984);color:#4f5669">Poor</span>
<span class="t" style="left:416.30px;top:494.00px;font-size:9.8px;-webkit-text-stroke:0.25px #dc145c;transform:scaleX(0.9596);color:#dc145c">0%</span>
<span class="t" style="left:76.55px;top:559.00px;font-size:8.3px;-webkit-text-stroke:0.2px #5f6678;transform:scaleX(0.9452);color:#5f6678">6. Apr</span>
<span class="t" style="left:140.85px;top:559.00px;font-size:8.3px;-webkit-text-stroke:0.2px #5f6678;transform:scaleX(0.9452);color:#5f6678">7. Apr</span>
<span class="t" style="left:205.15px;top:559.00px;font-size:8.3px;-webkit-text-stroke:0.2px #5f6678;transform:scaleX(0.9452);color:#5f6678">8. Apr</span>
<span class="t" style="left:269.45px;top:559.00px;font-size:8.3px;-webkit-text-stroke:0.2px #5f6678;transform:scaleX(0.9452);color:#5f6678">9. Apr</span>
<span class="t" style="left:331.75px;top:559.00px;font-size:8.3px;-webkit-text-stroke:0.2px #5f6678;transform:scaleX(0.9317);color:#5f6678">10. Apr</span>
<span class="t" style="left:396.05px;top:559.00px;font-size:8.3px;-webkit-text-stroke:0.2px #5f6678;transform:scaleX(0.9538);color:#5f6678">11. Apr</span>
<span class="t" style="left:460.30px;top:559.00px;font-size:8.3px;-webkit-text-stroke:0.2px #5f6678;transform:scaleX(0.9317);color:#5f6678">12. Apr</span>
<span class="t" style="left:46.80px;top:471.00px;font-size:8.3px;transform:scaleX(0.9439);color:#5f6678">0.000</span>
<span class="t" style="left:84.57px;top:471.00px;font-size:8.3px;transform:scaleX(0.9439);color:#5f6678">0.000</span>
<span class="t" style="left:122.34px;top:471.00px;font-size:8.3px;transform:scaleX(0.9439);color:#5f6678">0.000</span>
<span class="t" style="left:160.11px;top:471.00px;font-size:8.3px;transform:scaleX(0.9439);color:#5f6678">0.000</span>
<span class="t" style="left:197.88px;top:471.00px;font-size:8.3px;transform:scaleX(0.9439);color:#5f6678">0.000</span>
<span class="t" style="left:235.65px;top:471.00px;font-size:8.3px;transform:scaleX(0.9439);color:#5f6678">0.000</span>
<span class="t" style="left:273.42px;top:471.00px;font-size:8.3px;transform:scaleX(0.9439);color:#5f6678">0.000</span>
<span class="t" style="left:311.19px;top:471.00px;font-size:8.3px;transform:scaleX(0.9439);color:#5f6678">0.000</span>
<span class="t" style="left:348.96px;top:471.00px;font-size:8.3px;transform:scaleX(0.9439);color:#5f6678">0.000</span>
<span class="t" style="left:386.73px;top:471.00px;font-size:8.3px;transform:scaleX(0.9439);color:#5f6678">0.000</span>
<span class="t" style="left:424.50px;top:471.00px;font-size:8.3px;transform:scaleX(0.9439);color:#5f6678">0.001</span>
<span class="t" style="left:462.27px;top:471.00px;font-size:8.3px;transform:scaleX(0.9439);color:#5f6678">0.001</span>
<span class="t" style="left:40.90px;top:588.00px;font-size:6.4px;transform:scaleX(0.8512);color:#2c66dd">CrUX</span>
<span class="t" style="left:210.20px;top:580.00px;font-size:8.3px;-webkit-text-stroke:0.1px #4f5669;transform:scaleX(0.9906);color:#4f5669">75th %</span>
<span class="t" style="left:241.30px;top:580.00px;font-size:8.3px;-webkit-text-stroke:0.2px #1f9418;transform:scaleX(1.0065);color:#1f9418">0.020</span>
<span class="t" style="left:528.80px;top:395.00px;font-size:12.2px;font-weight:700;transform:scaleX(1.0144);color:#1f9418">529ms</span>
<span class="t" style="left:580.30px;top:397.00px;font-size:6.5px;font-weight:700;transform:scaleX(1.0984);color:#fff">-9%</span>
<span class="t" style="left:601.45px;top:398.00px;font-size:6.6px;-webkit-text-stroke:0.15px #e4e6ea;color:#e4e6ea">?</span>
<span class="t" style="left:513.60px;top:412.00px;font-size:9.0px;-webkit-text-stroke:0.12px #4f5669;transform:scaleX(1.0304);color:#4f5669">First Contentful Paint</span>
<span class="t" style="left:576.30px;top:494.00px;font-size:9.8px;transform:scaleX(0.8887);color:#4f5669">Good</span>
<span class="t" style="left:603.90px;top:494.00px;font-size:9.8px;-webkit-text-stroke:0.25px #1f9418;transform:scaleX(0.9616);color:#1f9418">100%</span>
<span class="t" style="left:701.20px;top:494.00px;font-size:9.8px;transform:scaleX(0.9363);color:#4f5669">Needs Improvement</span>
<span class="t" style="left:789.50px;top:494.00px;font-size:9.8px;-webkit-text-stroke:0.25px #e39312;transform:scaleX(0.9526);color:#e39312">0%</span>
<span class="t" style="left:875.90px;top:494.00px;font-size:9.8px;transform:scaleX(0.8984);color:#4f5669">Poor</span>
<span class="t" style="left:900.30px;top:494.00px;font-size:9.8px;-webkit-text-stroke:0.25px #dc145c;transform:scaleX(0.9596);color:#dc145c">0%</span>
<span class="t" style="left:560.55px;top:559.00px;font-size:8.3px;-webkit-text-stroke:0.2px #5f6678;transform:scaleX(0.9452);color:#5f6678">6. Apr</span>
<span class="t" style="left:624.85px;top:559.00px;font-size:8.3px;-webkit-text-stroke:0.2px #5f6678;transform:scaleX(0.9452);color:#5f6678">7. Apr</span>
<span class="t" style="left:689.15px;top:559.00px;font-size:8.3px;-webkit-text-stroke:0.2px #5f6678;transform:scaleX(0.9452);color:#5f6678">8. Apr</span>
<span class="t" style="left:753.45px;top:559.00px;font-size:8.3px;-webkit-text-stroke:0.2px #5f6678;transform:scaleX(0.9452);color:#5f6678">9. Apr</span>
<span class="t" style="left:815.75px;top:559.00px;font-size:8.3px;-webkit-text-stroke:0.2px #5f6678;transform:scaleX(0.9317);color:#5f6678">10. Apr</span>
<span class="t" style="left:880.05px;top:559.00px;font-size:8.3px;-webkit-text-stroke:0.2px #5f6678;transform:scaleX(0.9538);color:#5f6678">11. Apr</span>
<span class="t" style="left:944.30px;top:559.00px;font-size:8.3px;-webkit-text-stroke:0.2px #5f6678;transform:scaleX(0.9317);color:#5f6678">12. Apr</span>
<span class="t" style="left:516.80px;top:471.00px;font-size:8.3px;transform:scaleX(0.8563);color:#5f6678">0 ms</span>
<span class="t" style="left:582.95px;top:471.00px;font-size:8.3px;transform:scaleX(0.9001);color:#5f6678">100 ms</span>
<span class="t" style="left:657.55px;top:471.00px;font-size:8.3px;transform:scaleX(0.9001);color:#5f6678">200 ms</span>
<span class="t" style="left:732.15px;top:471.00px;font-size:8.3px;transform:scaleX(0.9001);color:#5f6678">300 ms</span>
<span class="t" style="left:806.75px;top:471.00px;font-size:8.3px;transform:scaleX(0.9001);color:#5f6678">400 ms</span>
<span class="t" style="left:881.35px;top:471.00px;font-size:8.3px;transform:scaleX(0.9001);color:#5f6678">500 ms</span>
<span class="t" style="left:948.95px;top:471.00px;font-size:8.3px;transform:scaleX(0.9001);color:#5f6678">600 ms</span>
<span class="t" style="left:524.90px;top:588.00px;font-size:6.4px;transform:scaleX(0.8512);color:#2c66dd">CrUX</span>
<span class="t" style="left:695.90px;top:580.00px;font-size:8.3px;-webkit-text-stroke:0.1px #4f5669;transform:scaleX(0.9906);color:#4f5669">75th %</span>
<span class="t" style="left:727.50px;top:580.00px;font-size:8.3px;-webkit-text-stroke:0.2px #1f9418;transform:scaleX(0.9706);color:#1f9418">1.63s</span>
</div>
</body></html>
